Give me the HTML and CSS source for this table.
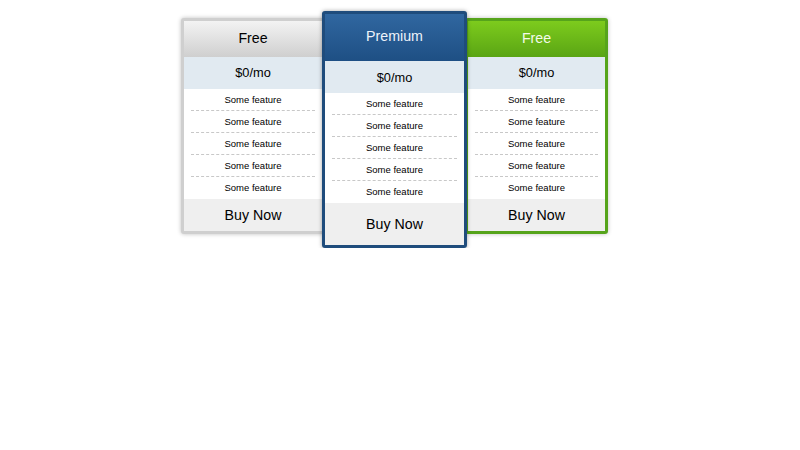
FILE: index.html
```
<!DOCTYPE html>
<html>
<head>
<meta charset="utf-8">
<link rel="stylesheet" href="styles.css">
</head>
<body>
<div class="table">
  <div class="plan plan-free">
    <div class="head">Free</div>
    <div class="price">$0/mo</div>
    <ul class="features">
      <li>Some feature</li>
      <li>Some feature</li>
      <li>Some feature</li>
      <li>Some feature</li>
      <li>Some feature</li>
    </ul>
    <div class="buy">Buy Now</div>
  </div>
  <div class="plan plan-premium">
    <div class="head">Premium</div>
    <div class="price">$0/mo</div>
    <ul class="features">
      <li>Some feature</li>
      <li>Some feature</li>
      <li>Some feature</li>
      <li>Some feature</li>
      <li>Some feature</li>
    </ul>
    <div class="buy">Buy Now</div>
  </div>
  <div class="plan plan-green">
    <div class="head">Free</div>
    <div class="price">$0/mo</div>
    <ul class="features">
      <li>Some feature</li>
      <li>Some feature</li>
      <li>Some feature</li>
      <li>Some feature</li>
      <li>Some feature</li>
    </ul>
    <div class="buy">Buy Now</div>
  </div>
</div>
</body>
</html>
```
FILE: styles.css
```
html, body {
  margin: 0;
  padding: 0;
  background: #ffffff;
}
body {
  font-family: "Liberation Sans", Arial, sans-serif;
  color: #000;
}
.table {
  display: flex;
  align-items: flex-start;
  padding: 11px 0 0 181px;
}
.plan {
  width: 138px;
  border: 3px solid #cfcfcf;
  border-radius: 3px;
  background: #fff;
  box-shadow: 0 0 4px rgba(0, 0, 0, 0.25);
  margin-top: 7px;
  position: relative;
  text-align: center;
}
.head {
  height: 36px;
  line-height: 35px;
  font-size: 14.2px;
  background: linear-gradient(#f3f3f3, #cfcfcf);
  color: #000;
}
.price {
  height: 32px;
  line-height: 32px;
  font-size: 12.8px;
  background: #e1eaf1;
}
.features {
  list-style: none;
  margin: 0;
  padding: 0 7px;
}
.features li {
  height: 22px;
  line-height: 22px;
  font-size: 9.5px;
  border-bottom: 1px dashed #c8c8c8;
  box-sizing: border-box;
}
.features li:last-child {
  border-bottom: none;
}
.buy {
  height: 32px;
  line-height: 32px;
  font-size: 14.2px;
  background: #efefef;
}
.plan-premium {
  width: 139px;
  margin-top: 0;
  margin-left: -3px;
  border-color: #1f4c7c;
  z-index: 2;
  box-shadow: 0 0 4px rgba(0, 0, 0, 0.35);
}
.plan-premium .head {
  height: 47px;
  line-height: 44px;
  color: #eef3fa;
  background: linear-gradient(#3067a0, #1e4f84);
}
.plan-premium .price {
  height: 32px;
  line-height: 33px;
}
.plan-premium .buy {
  height: 42px;
  line-height: 42px;
}
.plan-green {
  width: 137px;
  margin-left: -2px;
  border-color: #56a41b;
  z-index: 1;
}
.plan-green .head {
  color: #f4fbea;
  background: linear-gradient(#7dcb1d, #5aa514);
}
```
